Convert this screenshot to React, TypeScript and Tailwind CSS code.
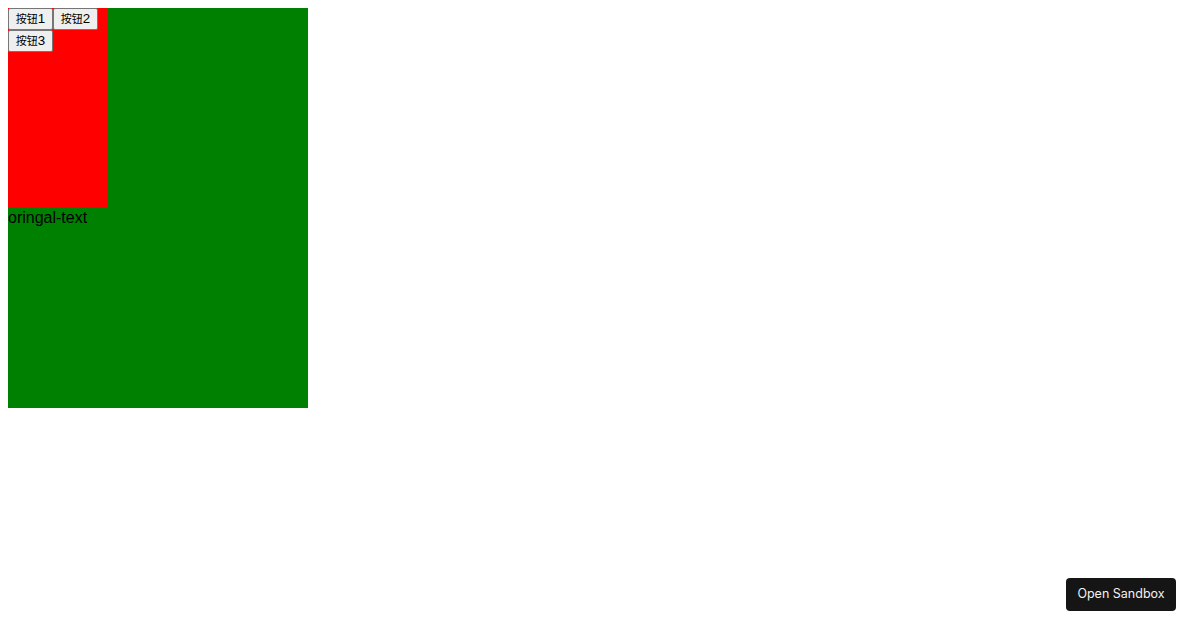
import React from "react";

function Btn({ label }: { label: string }) {
  return (
    <button
      type="button"
      className="flex h-[22px] w-[45px] items-center justify-center whitespace-nowrap rounded-[2px] border border-[#767676] bg-[#efefef] px-[6px] text-[13.33px] leading-none text-black"
      style={{ fontFamily: '"Liberation Sans", "Noto Sans CJK SC", sans-serif' }}
    >
      <span className="text-[11px]">按钮</span>
      <span>{label}</span>
    </button>
  );
}

export default function App() {
  return (
    <div
      className="min-h-[630px] bg-white p-2 text-black"
      style={{ fontFamily: '"Liberation Sans", "Noto Sans CJK SC", sans-serif' }}
    >
      <div className="h-[400px] w-[300px] bg-[#008000]">
        <div className="flex h-[200px] w-[100px] flex-wrap content-start bg-[#ff0000]">
          <Btn label="1" />
          <Btn label="2" />
          <Btn label="3" />
        </div>
        <div className="pt-px text-[16px] leading-[18px]">oringal-text</div>
      </div>
      <button
        type="button"
        className="fixed bottom-[19px] right-[24px] flex h-[33px] w-[110px] items-center justify-center rounded-[4px] bg-[#151515] text-[12.5px] text-[#f2f2f2]"
        style={{ fontFamily: 'Inter, "Liberation Sans", sans-serif' }}
      >
        Open Sandbox
      </button>
    </div>
  );
}
